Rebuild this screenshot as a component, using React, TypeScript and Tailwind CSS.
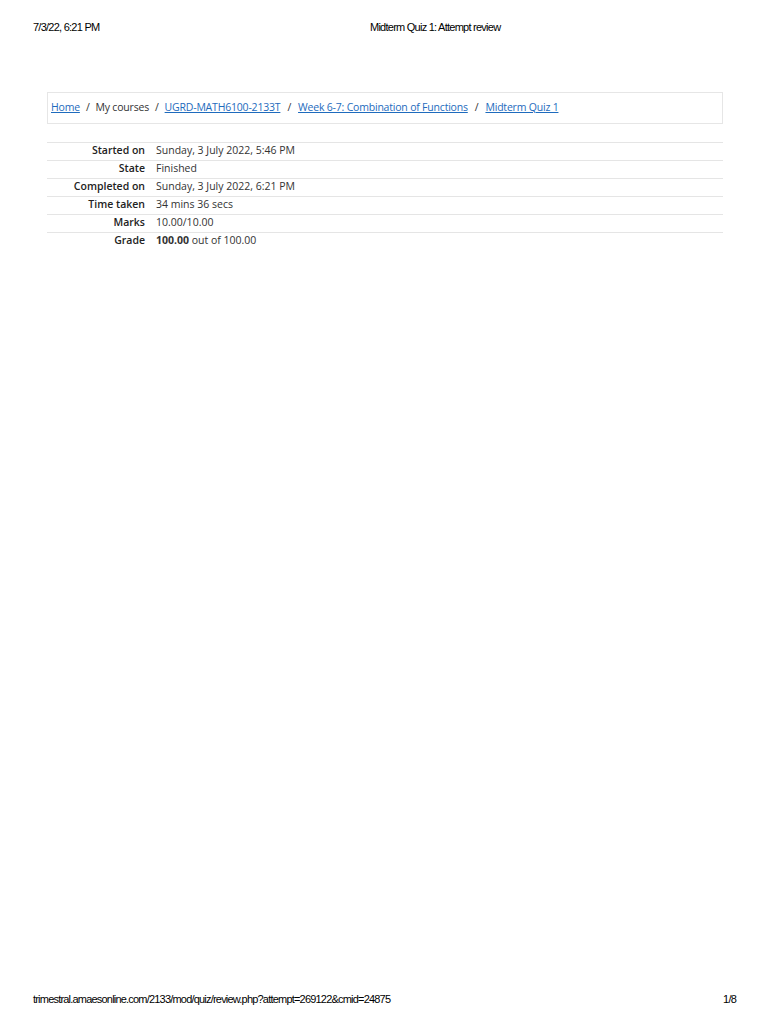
import React from 'react';

const rows: { label: string; value: React.ReactNode }[] = [
  { label: 'Started on', value: 'Sunday, 3 July 2022, 5:46 PM' },
  { label: 'State', value: 'Finished' },
  { label: 'Completed on', value: 'Sunday, 3 July 2022, 6:21 PM' },
  { label: 'Time taken', value: '34 mins 36 secs' },
  { label: 'Marks', value: '10.00/10.00' },
  { label: 'Grade', value: <><b className="font-bold">100.00</b> out of 100.00</> },
];

const Sep = () => <span className="mx-[6px] text-[#333]">/</span>;

export default function App() {
  return (
    <div className="w-[768px] h-[1024px] bg-white flex flex-col relative">
      <div className="flex px-[33px] pt-[19px] text-[11px] text-black font-['Liberation_Sans',Arial,sans-serif] tracking-[-0.75px]">
        <div className="w-[337px]">7/3/22, 6:21 PM</div>
        <div>Midterm Quiz 1: Attempt review</div>
      </div>

      <div className="mt-[56px] ml-[47px] mr-[45px] font-['Open_Sans','Noto_Sans',sans-serif] text-[10.5px] text-[#333]">
        <div className="h-[32px] border border-[#e6e6e6] flex items-center px-[3px] tracking-[-0.2px]">
          <a className="text-[#1e6bbd] underline">Home</a>
          <Sep />
          <span>My courses</span>
          <Sep />
          <a className="text-[#1e6bbd] underline">UGRD-MATH6100-2133T</a>
          <span className="mx-[7px] text-[#333]">/</span>
          <a className="text-[#1e6bbd] underline">Week 6-7: Combination of Functions</a>
          <span className="mx-[7px] text-[#333]">/</span>
          <a className="text-[#1e6bbd] underline">Midterm Quiz 1</a>
        </div>

        <div className="mt-[18px]">
          {rows.map(r => (
            <div key={r.label} className="flex h-[18px] items-center border-t border-[#e5e5e5]">
              <div className="w-[98px] text-right font-semibold text-[#222]">{r.label}</div>
              <div className="pl-[11px] text-[#333]">{r.value}</div>
            </div>
          ))}
        </div>
      </div>

      <div className="mt-auto flex justify-between pl-[33px] pr-[32px] pb-[17px] text-[11px] text-black font-['Liberation_Sans',Arial,sans-serif] tracking-[-0.8px]">
        <div>trimestral.amaesonline.com/2133/mod/quiz/review.php?attempt=269122&amp;cmid=24875</div>
        <div>1/8</div>
      </div>
    </div>
  );
}
